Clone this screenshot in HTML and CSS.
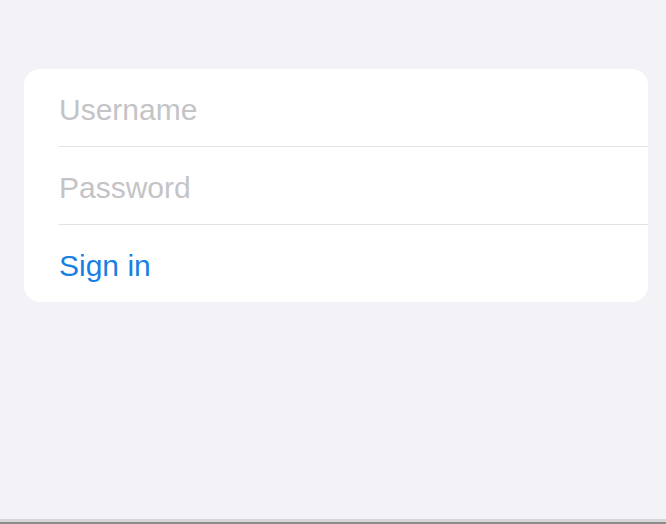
FILE: index.html
```html
<!DOCTYPE html>
<html lang="en">
<head>
  <meta charset="UTF-8" />
  <meta name="viewport" content="width=device-width, initial-scale=1.0" />
  <title>Sign in</title>
  <link rel="stylesheet" href="styles.css">
</head>
<body>
  <div class="screen">
    <form class="login-card" onsubmit="return false;">
      <div class="row">
        <input class="field" type="text" placeholder="Username" />
      </div>
      <div class="row">
        <input class="field" type="password" placeholder="Password" />
      </div>
      <div class="row last">
        <button class="signin" type="submit">Sign in</button>
      </div>
    </form>
  </div>
</body>
</html>
```

FILE: styles.css
```css
html, body {
  margin: 0;
  padding: 0;
  background: #f2f2f7;
  font-family: 'Liberation Sans', Arial, sans-serif;
}
.screen {
  box-sizing: border-box;
  height: 524px;
  padding: 69px 18px 0 24px;
  border-bottom: 2px solid #8c8c8c;
  box-shadow: inset 0 -3px 0 #d6d6d9;
}
.login-card {
  background: #fff;
  border-radius: 16px;
  padding-left: 35px;
  overflow: hidden;
}
.row {
  box-sizing: border-box;
  height: 78px;
  padding-top: 4px;
  display: flex;
  align-items: center;
  border-bottom: 1px solid #e1e1e3;
}
.row.last {
  border-bottom: none;
  height: 77px;
}
.field {
  width: 100%;
  border: none;
  outline: none;
  padding: 0;
  margin: 0;
  background: transparent;
  font-family: inherit;
  font-size: 30px;
  color: #222;
}
.field::placeholder {
  color: #c4c4c7;
}
.signin {
  border: none;
  background: none;
  padding: 0;
  margin: 0;
  font-family: inherit;
  font-size: 30px;
  color: #1a7fe3;
  cursor: pointer;
}
```
